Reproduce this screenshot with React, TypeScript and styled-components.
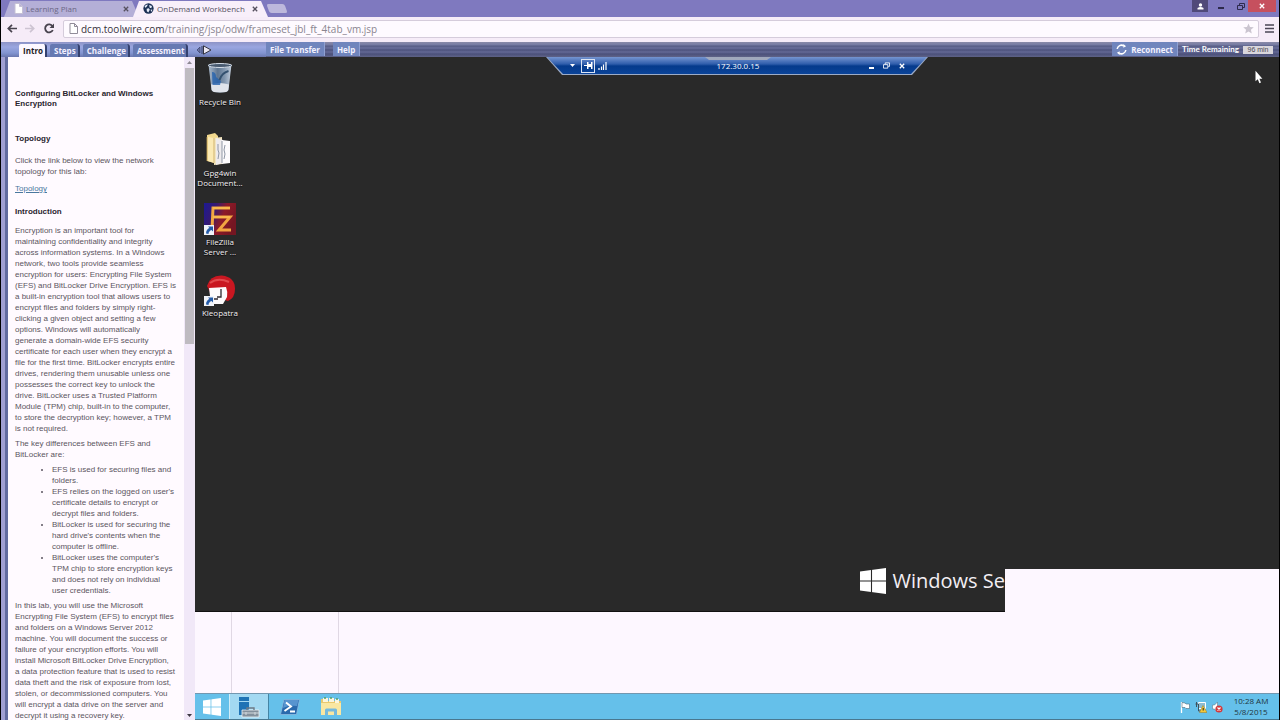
import React from 'react';
import styled, { createGlobalStyle, css } from 'styled-components';

const ui = `'Open Sans', 'Noto Sans', sans-serif`;
const doc = `'Liberation Sans', Arial, sans-serif`;

const GlobalStyle = createGlobalStyle`
  * { box-sizing: border-box; }
  body { margin: 0; background: #000; overflow: hidden; }
  button, input { font: inherit; color: inherit; margin: 0; padding: 0; border: 0; background: none; }
  svg { display: block; flex: none; }
`;

const Window = styled.div`
  display: flex;
  flex-direction: column;
  height: 100vh;
  padding: 0 1px;
  font-family: ${ui};
  font-size: 8px;
`;

/* ---------- browser chrome ---------- */
const TitleBar = styled.header`
  display: flex;
  align-items: stretch;
  height: 17px;
  padding: 0 3px;
  background: #7f79bf;
`;
const TabShape = styled.div<{ $active?: boolean }>`
  display: flex;
  align-items: center;
  width: 135px;
  margin-right: ${p => (p.$active ? 0 : -6)}px;
  padding: 0 10px;
  gap: 3px;
  background: ${p => (p.$active ? '#f8effa' : '#b4afd7')};
  color: ${p => (p.$active ? '#55505f' : '#6c6886')};
  clip-path: polygon(0 100%, 6px 1px, calc(100% - 7px) 1px, 100% 100%);
`;
const TabTitle = styled.span`
  flex: 1;
  white-space: nowrap;
`;
const IconButton = styled.button`
  display: flex;
  align-items: center;
  justify-content: center;
`;
const NewTab = styled.button`
  align-self: center;
  width: 18px;
  height: 9px;
  && { background: #bdb8dc; }
  border-radius: 2px;
  transform: skewX(20deg);
`;
const Spacer = styled.div`
  flex: 1;
`;
const CaptionButton = styled(IconButton)<{ $w: number; $bg?: string }>`
  && { background: ${p => p.$bg || 'transparent'}; }
  width: ${p => p.$w}px;
  height: 12px;
  color: #2d2a4c;
`;
const AddressRow = styled.div`
  display: flex;
  align-items: center;
  height: 25px;
  padding: 0 5px 2px 6px;
  gap: 8px;
  background: #f6ecf8;
`;
const Omnibox = styled.div`
  display: flex;
  align-items: center;
  flex: 1;
  height: 18px;
  margin-right: -2px;
  padding: 0 4px 0 5px;
  gap: 3px;
  background: #fefaff;
  border: 1px solid #d5ccdb;
  border-radius: 2px;
`;
const UrlText = styled.span`
  flex: 1;
  font-size: 10px;
  line-height: 14px;
  color: #8a8590;
  white-space: nowrap;
  b { font-weight: 400; color: #37323c; }
`;

/* ---------- workbench bar ---------- */
const WorkBar = styled.nav`
  display: flex;
  align-items: stretch;
  height: 15px;
  background:
    linear-gradient(#8d93c6, #9aa6e0 5px, #8294d0 11px, #6b77ae) 0 0 / 265px 100% no-repeat,
    linear-gradient(#8a8aa8, #757aa3 3px, #565b83 4px, #6a6f9b 6px, #4d527c 8px, #646995 10px, #4b507a 12px, #5f6388 15px);
`;
const PageTabs = styled.div`
  display: flex;
  align-items: stretch;
  gap: 3px;
  width: 194px;
  padding: 2px 0 0 18px;
`;
const PageTab = styled.button<{ $active?: boolean }>`
  && {
    padding: 0 2px 0 4px;
    background: ${p => (p.$active ? '#fdf8ff' : '#6679b2')};
    color: ${p => (p.$active ? '#1d1a24' : '#f4f0ff')};
    font-weight: 700;
    line-height: 12px;
    border-right: 2px solid #35416f;
    border-radius: 2px 3px 0 0;
    white-space: nowrap;
  }
`;
const BarButton = styled.button<{ $gap?: number }>`
  && {
    display: flex;
    align-items: center;
    gap: 4px;
    height: 14px;
    padding: 0 4px;
    margin-left: ${p => p.$gap || 0}px;
    background: #7085bd;
    border-right: 1px solid #8fa0d2;
    color: #f4f2ff;
    font-weight: 700;
    white-space: nowrap;
  }
`;
const TimeBox = styled.div`
  display: flex;
  align-items: center;
  gap: 4px;
  height: 13px;
  margin: 0 6px 0 4px;
  color: #fff;
  font-family: Lato, sans-serif;
  font-weight: 700;
  white-space: nowrap;
`;
const TimeValue = styled.output`
  width: 30px;
  height: 8px;
  margin-top: 2px;
  background: #d9d6dc;
  color: #4b4850;
  font: 7px/8px ${doc};
  text-align: center;
`;

/* ---------- lab guide ---------- */
const Body = styled.main`
  display: flex;
  flex: 1;
  min-height: 0;
`;
const Guide = styled.aside`
  display: flex;
  width: 194px;
  min-height: 0;
  overflow: hidden;
  background: #fffaff;
  border-left: 4px solid #a09fd2;
`;
const GuideEdge = styled.div`
  width: 3px;
  background: #626b9f;
`;
const GuideText = styled.article`
  flex: 1;
  min-width: 0;
  padding: 32px 5px 0 7px;
  color: #5b5560;
  font: 8px/11px ${doc};
  p, li { white-space: pre-line; }
  p { margin: 0 0 4px; }
  ul { margin: 0 0 4px; padding-left: 37px; }
  a { color: #4a789e; }
`;
const GuideHeading = styled.h2<{ $top?: number; $bottom: number }>`
  margin: ${p => p.$top || 0}px 0 ${p => p.$bottom}px;
  color: #29252e;
  font-size: 8px;
  line-height: ${p => (p.$top ? 11 : 10)}px;
`;
const LinkLine = styled.p`
  && { margin: 6px 0 0; }
`;
const Scroller = styled.div`
  display: flex;
  flex-direction: column;
  align-items: center;
  width: 11px;
  padding: 4px 0 3px;
  background: #f1e8f8;
`;
const Thumb = styled.div`
  width: 9px;
  height: 42%;
  margin-top: 4px;
  background: #bfbbc1;
`;

/* ---------- remote desktop ---------- */
const Remote = styled.section`
  position: relative;
  display: flex;
  flex-direction: column;
  flex: 1;
  min-width: 0;
  background: #fdf7ff;
`;
const Desktop = styled.div`
  flex: 1;
  min-height: 0;
  background: #292929;
`;
const Shortcuts = styled.div`
  display: flex;
  flex-direction: column;
  width: 50px;
  padding-top: 4px;
`;
const Shortcut = styled.button`
  display: flex;
  flex-direction: column;
  align-items: center;
  height: 71px;
  gap: 2px;
  && { color: #f4f0f4; line-height: 10px; }
  span { white-space: pre; text-shadow: 0 1px 1px #000; }
`;
const BrandStrip = styled.div`
  width: 810px;
  max-width: 75%;
  height: 43px;
  background: #292929;
  border-bottom: 1px solid #111;
`;
const Brand = styled.div`
  display: flex;
  justify-content: flex-end;
  align-items: center;
  gap: 7px;
  height: 24px;
  color: #f3eff4;
  font-size: 20px;
  line-height: 24px;
  white-space: nowrap;
`;
const Blank = styled.div`
  display: flex;
  height: 81px;
`;
const BlankColumn = styled.div<{ $w: number }>`
  width: ${p => p.$w}px;
  border-right: 1px solid #e0d8e4;
`;

const BarOutline = styled.div`
  position: absolute;
  top: 0;
  left: 351px;
  width: 382px;
  height: 18px;
  background: #9cabc6;
  clip-path: polygon(0 0, 100% 0, calc(100% - 16px) 100%, 16px 100%);
`;
const BarFill = styled.div`
  display: flex;
  align-items: center;
  height: 17px;
  padding: 0 23px 0 24px;
  background: linear-gradient(#7695d1, #2f5dab 7px, #053a8c 9px, #0a4398);
  clip-path: polygon(1px 0, calc(100% - 1px) 0, calc(100% - 17px) 100%, 17px 100%);
  color: #fff;
`;
const BarTitle = styled.div`
  flex: 1;
  display: flex;
  flex-direction: column;
  align-items: center;
  align-self: flex-start;
  line-height: 11px;
  &::before {
    content: '';
    width: 66px;
    height: 3px;
    background: #a0a8bd;
    clip-path: polygon(0 0, 100% 0, calc(100% - 4px) 100%, 4px 100%);
  }
`;
const PinButton = styled(IconButton)`
  && { border: 1px solid #dbe4f4; margin: 0 3px 0 6px; }
  width: 14px;
  height: 14px;
`;
const BarControls = styled.div`
  display: flex;
  align-items: center;
  gap: 9px;
`;
const Pointer = styled.div`
  position: absolute;
  top: 13px;
  right: 16px;
`;

const TaskBar = styled.footer`
  display: flex;
  align-items: stretch;
  height: 27px;
  background: #65c0ea;
  border-top: 1px solid #7297b0;
  border-bottom: 1px solid #497890;
`;
const taskHot = css`
  && {
    background: #a3d9f2;
    border-left: 1px solid #d0edf9;
    border-right: 1px solid #4485a5;
  }
`;
const Task = styled(IconButton)<{ $w: number; $hot?: boolean }>`
  width: ${p => p.$w}px;
  ${p => p.$hot && taskHot}
`;
const Tray = styled.div`
  display: flex;
  align-items: center;
  gap: 5px;
`;
const Clock = styled.time`
  width: 56px;
  padding-top: 1px;
  color: #1f3540;
  line-height: 11px;
  text-align: center;
  white-space: pre;
`;

/* ---------- drawings ---------- */
const PageIcon = ({ dim = '#918c99' }: { dim?: string }) => (
  <svg width="9" height="11" viewBox="0 0 9 11" fill="#fff" stroke={dim} strokeWidth="1">
    <path d="M1 .5h4.5l3 3v7H1zM5.5.5v3h3" />
  </svg>
);
const CloseX = ({ s = 6, c = '#56515f' }: { s?: number; c?: string }) => (
  <svg width={s} height={s} viewBox="0 0 6 6" stroke={c} strokeWidth="1.3"><path d="M.8.8l4.4 4.4M5.2.8L.8 5.2" /></svg>
);
const Globe = () => (
  <svg width="11" height="11" viewBox="0 0 12 12">
    <circle cx="6" cy="6" r="5.6" fill="#1c3155" />
    <path d="M1.6 4.2Q3 1.5 5.2 1.6L4.6 3.4 2.8 5.2zM6.7 2.2l3 1.2-.6 2.2-1.8-.5zM4 6.4l2.4-.6 1 1.5-1.6 3-1.6-1.2zM8.4 7.2l2 .2-1.6 2.4z" fill="#e8eefb" />
  </svg>
);
const WinLogo = ({ size, cut }: { size: number; cut: string }) => (
  <svg width={size} height={size} viewBox="0 0 26 26">
    <path d="M0 3.6L26 0v26L0 22.4z" fill="#fff" />
    <path d="M11.5 0v26M0 13h26" stroke={cut} strokeWidth="1.1" />
  </svg>
);
const ShortcutArrow = () => (
  <g>
    <path d="M0 22h10v10H0z" fill="#f1f3f8" />
    <path d="M2 30.500C2 27 4 25.500 5.500 25L4 23.500h5v5L7.500 27C6 27.500 4.500 29 4.500 31z" fill="#245ba8" />
  </g>
);
const BinIcon = () => (
  <svg width="34" height="34" viewBox="0 0 34 34">
    <defs>
      <linearGradient id="bin" x1="0" x2="1"><stop offset="0" stopColor="#a9b9cc" /><stop offset=".4" stopColor="#5f7691" /><stop offset=".7" stopColor="#8196ae" /><stop offset="1" stopColor="#c3cedc" /></linearGradient>
    </defs>
    <path d="M5.500 3.500h23L25.500 29Q25 31.500 17 31.500T8.500 29z" fill="url(#bin)" />
    <path d="M8 23.500q9-3 18 0l-.8 5.500Q25 31.500 17 31.500T8.700 29z" fill="#dfe3ea" />
    <path d="M9 11q4 0 4 5l5 4-1 4H9.500z" fill="#2461ae" opacity=".8" />
    <path d="M25.500 10q-7 2-9 9" stroke="#34516f" strokeWidth="2" fill="none" />
    <ellipse cx="17" cy="4.500" rx="11.700" ry="2" fill="#485a70" stroke="#d4dde8" />
  </svg>
);
const FolderDocs = () => (
  <svg width="34" height="34" viewBox="0 0 34 34">
    <path d="M4 3l8-2 3 3v28L4 29z" fill="#f2d98e" />
    <path d="M5 5l6 1v25l-6-2z" fill="#fbeab4" />
    <path d="M11 6l8-1v27l-8 1z" fill="#f3e6c0" />
    <path d="M13 6l7 2v23l-7 2z" fill="#eeebed" />
    <path d="M19 8l8 1v22l-8 1z" fill="#fdfbfd" />
    <path d="M15 12v6l1 3-1 6M19 9v22M22 13l-1 5 1 4-1 5" stroke="#9097a5" fill="none" strokeWidth="1" />
    <path d="M4 5v24M11 6v25" stroke="#c9a75c" strokeWidth=".8" />
  </svg>
);
const FileZilla = () => (
  <svg width="32" height="32" viewBox="0 0 32 32">
    <defs><linearGradient id="fz" x1="0" y1="0" x2="1" y2=".4"><stop offset="0" stopColor="#1c1993" /><stop offset=".35" stopColor="#351a72" /><stop offset=".65" stopColor="#8d1a28" /><stop offset="1" stopColor="#751622" /></linearGradient></defs>
    <path d="M0 0h32v32H0z" fill="url(#fz)" />
    <path d="M8 27L9 5h17M9 14h17L15 27h12" stroke="#f2a541" strokeWidth="3" fill="none" />
    <path d="M9 5h17M9 14h17" stroke="#ffcb5c" strokeWidth="1" fill="none" />
    <ShortcutArrow />
  </svg>
);
const Kleopatra = () => (
  <svg width="32" height="32" viewBox="0 0 32 32">
    <path d="M3 12Q6 1 18 1.500 31 3 31 15q0 9-7 12L8 22z" fill="#c91721" />
    <path d="M6 9Q14 3 25 8" stroke="#e04a4e" strokeWidth="2" fill="none" />
    <path d="M5 14l17-1q2 5 1 10l-4 7H7z" fill="#fdfafc" />
    <path d="M17 15v8h-4M9 25h5" stroke="#2f2a30" strokeWidth="1.300" fill="none" />
    <ShortcutArrow />
  </svg>
);
const ServerManager = () => (
  <svg width="22" height="22" viewBox="0 0 22 22">
    <path d="M1 1h10v4H1zM1 6h10v13H1z" fill="#1f73b5" />
    <path d="M1 5.500h10" stroke="#a3d9f2" />
    <path d="M4 14h17v7H4z" fill="#84909c" stroke="#eef4f8" strokeWidth=".8" />
    <path d="M9 14v-2h7v2" fill="none" stroke="#6d7a86" strokeWidth="1.400" />
    <path d="M4 17h17M8 16v3M17 16v3" stroke="#d4dade" strokeWidth="1" />
  </svg>
);
const PowerShell = () => (
  <svg width="20" height="16" viewBox="0 0 20 16">
    <path d="M4 .5h15.500L16.500 15.500H.5z" fill="#2a6aad" stroke="#8dbbe0" strokeWidth=".8" />
    <path d="M4.500 1h14l-1.500 6Q9 6 3 9z" fill="#5794cf" />
    <path d="M6 3.500l5 4L4.500 12M10 12.500h5" stroke="#fff" strokeWidth="1.900" fill="none" />
  </svg>
);
const Explorer = () => (
  <svg width="22" height="19" viewBox="0 0 22 19">
    <path d="M1 2h6l1 2h13v13H1z" fill="#e9c970" />
    <path d="M3 1h5v4H3zM9 1h5v4H9zM15 2h4v4h-4z" fill="#fbf5df" />
    <path d="M4 1h2M10 1h2M16 2h2" stroke="#53a06b" strokeWidth="1.500" />
    <path d="M1 6h20v12H1z" fill="#fae7a2" />
    <path d="M5 18v-5q0-1.500 1.500-1.500h9q1.500 0 1.500 1.500v5h-3v-3.500H8V18z" fill="#76b9dd" />
  </svg>
);
const FlagIcon = () => (
  <svg width="10" height="12" viewBox="0 0 10 12"><path d="M1.500 1v11" stroke="#fff" strokeWidth="1.300" /><path d="M2 1.500l3 .5 1 1h3.500v4.500H6L5 6.500H2z" fill="#fff" stroke="#4c6c7c" strokeWidth=".6" /></svg>
);
const NetIcon = () => (
  <svg width="12" height="12" viewBox="0 0 12 12"><path d="M3.500 1.500h7v6h-7z" fill="#8ebdd2" stroke="#fff" /><path d="M1.500 1v5M.5 3h3M3.500 3v7h3" stroke="#40525c" fill="none" /><path d="M8 4.500l4 7H4.500z" fill="#f4c838" stroke="#a87a16" strokeWidth=".5" /><path d="M8.200 7v2.500" stroke="#222" /></svg>
);
const SoundIcon = () => (
  <svg width="11" height="12" viewBox="0 0 11 12"><path d="M.5 4h2l3-3v10l-3-3h-2z" fill="#fff" stroke="#5f7e8e" strokeWidth=".6" /><circle cx="7" cy="8" r="3.600" fill="#d3383b" /><path d="M5.500 6.500l3 3M8.500 6.500l-3 3" stroke="#fff" strokeWidth="1.200" /></svg>
);

const shortcuts: [string, React.FC][] = [
  ['Recycle Bin', BinIcon],
  ['Gpg4win\nDocument...', FolderDocs],
  ['FileZilla\nServer ...', FileZilla],
  ['Kleopatra', Kleopatra],
];

const introduction = `Encryption is an important tool for
maintaining confidentiality and integrity
across information systems. In a Windows
network, two tools provide seamless
encryption for users: Encrypting File System
(EFS) and BitLocker Drive Encryption. EFS is
a built-in encryption tool that allows users to
encrypt files and folders by simply right-
clicking a given object and setting a few
options. Windows will automatically
generate a domain-wide EFS security
certificate for each user when they encrypt a
file for the first time. BitLocker encrypts entire
drives, rendering them unusable unless one
possesses the correct key to unlock the
drive. BitLocker uses a Trusted Platform
Module (TPM) chip, built-in to the computer,
to store the decryption key; however, a TPM
is not required.`;

const differences = [
  'EFS is used for securing files and\nfolders.',
  "EFS relies on the logged on user's\ncertificate details to encrypt or\ndecrypt files and folders.",
  "BitLocker is used for securing the\nhard drive's contents when the\ncomputer is offline.",
  "BitLocker uses the computer's\nTPM chip to store encryption keys\nand does not rely on individual\nuser credentials.",
];

const labSummary = `In this lab, you will use the Microsoft
Encrypting File System (EFS) to encrypt files
and folders on a Windows Server 2012
machine. You will document the success or
failure of your encryption efforts. You will
install Microsoft BitLocker Drive Encryption,
a data protection feature that is used to resist
data theft and the risk of exposure from lost,
stolen, or decommissioned computers. You
will encrypt a data drive on the server and
decrypt it using a recovery key.`;

export default function App() {
  return (
    <Window>
      <GlobalStyle />
      <TitleBar>
        <TabShape>
          <PageIcon dim="#c5c0d4" />
          <TabTitle>Learning Plan</TabTitle>
          <IconButton aria-label="Close Learning Plan"><CloseX /></IconButton>
        </TabShape>
        <TabShape $active>
          <Globe />
          <TabTitle>OnDemand Workbench</TabTitle>
          <IconButton aria-label="Close OnDemand Workbench"><CloseX /></IconButton>
        </TabShape>
        <NewTab aria-label="New tab" />
        <Spacer />
        <CaptionButton $w={16} $bg="#504979" aria-label="Profile">
          <svg width="7" height="7" viewBox="0 0 7 7" fill="#fff"><circle cx="3.500" cy="2" r="1.700" /><path d="M.5 6.500V5q3-2 6 0v1.500z" /></svg>
        </CaptionButton>
        <CaptionButton $w={25} aria-label="Minimize"><svg width="6" height="6"><path d="M0 5h6" stroke="currentColor" strokeWidth="2" /></svg></CaptionButton>
        <CaptionButton $w={15} aria-label="Restore">
          <svg width="8" height="7" viewBox="0 0 8 7" fill="none" stroke="currentColor"><path d="M2.500 2V.5h5v4H6M.5 2.500h5v4h-5z" /></svg>
        </CaptionButton>
        <CaptionButton $w={28} $bg="#c6505e" aria-label="Close"><CloseX c="#fff" /></CaptionButton>
      </TitleBar>

      <AddressRow>
        <IconButton aria-label="Back"><svg width="10" height="9" viewBox="0 0 10 9" fill="none" stroke="#48434e" strokeWidth="1.700"><path d="M10 4.500H1.500M5 .8L1.300 4.500 5 8.200" /></svg></IconButton>
        <IconButton aria-label="Forward"><svg width="10" height="9" viewBox="0 0 10 9" fill="none" stroke="#cdc4d2" strokeWidth="1.700"><path d="M0 4.500h8.500M5 .8l3.700 3.700L5 8.200" /></svg></IconButton>
        <IconButton aria-label="Reload"><svg width="12" height="11" viewBox="0 0 12 11"><path d="M9.500 3.200A4 4 0 1 0 9.800 7" fill="none" stroke="#48434e" strokeWidth="1.800" /><path d="M11 .5v4.500H6.500z" fill="#48434e" /></svg></IconButton>
        <Omnibox>
          <PageIcon />
          <UrlText><b>dcm.toolwire.com</b>/training/jsp/odw/frameset_jbl_ft_4tab_vm.jsp</UrlText>
          <svg width="11" height="11" viewBox="0 0 24 24" fill="#cbc5d0"><path d="M12 1l3.300 7.600 8.200.7-6.200 5.400 1.900 8L12 18.400l-7.200 4.300 1.900-8L.5 9.300l8.200-.7z" /></svg>
        </Omnibox>
        <IconButton aria-label="Menu"><svg width="9" height="9"><path d="M0 1h9M0 4.500h9M0 8h9" stroke="#4a4554" strokeWidth="1.600" /></svg></IconButton>
      </AddressRow>

      <WorkBar>
        <PageTabs>
          <PageTab $active>Intro</PageTab>
          <PageTab>Steps</PageTab>
          <PageTab>Challenge</PageTab>
          <PageTab>Assessment</PageTab>
        </PageTabs>
        <IconButton aria-label="Toggle guide">
          <svg width="18" height="10" viewBox="0 0 18 10"><path d="M5 2v6L2 5z" fill="#6b74a8" stroke="#3f466e" strokeWidth=".8" /><path d="M7 1v8" stroke="#3f466e" strokeWidth="1.200" /><path d="M8.500 .8v8.400L16 5z" fill="#ece8f4" stroke="#34343f" /></svg>
        </IconButton>
        <BarButton $gap={53}>File Transfer</BarButton>
        <BarButton $gap={8}>Help</BarButton>
        <Spacer />
        <BarButton>
          <svg width="11" height="11" viewBox="0 0 12 12" fill="none" stroke="#fff" strokeWidth="1.700"><path d="M1.300 5.500A4.700 4.700 0 0 1 8.500 2M10.700 6.500A4.700 4.700 0 0 1 3.500 10" /><path d="M8 0v4l3-1.500zM4 8v4L1 9.500z" fill="#fff" stroke="none" /></svg>
          Reconnect
        </BarButton>
        <TimeBox>Time Remaining<TimeValue>96 min</TimeValue></TimeBox>
      </WorkBar>

      <Body>
        <Guide>
          <GuideEdge />
          <GuideText>
            <GuideHeading $bottom={24}>Configuring BitLocker and Windows Encryption</GuideHeading>
            <GuideHeading $top={24} $bottom={11}>Topology</GuideHeading>
            <p>{'Click the link below to view the network\ntopology for this lab:'}</p>
            <LinkLine><a href="#topology">Topology</a></LinkLine>
            <GuideHeading $top={12} $bottom={8}>Introduction</GuideHeading>
            <p>{introduction}</p>
            <p>{'The key differences between EFS and\nBitLocker are:'}</p>
            <ul>
              {differences.map(item => <li key={item}>{item}</li>)}
            </ul>
            <p>{labSummary}</p>
          </GuideText>
          <Scroller>
            <svg width="5" height="3"><path d="M0 3L2.500 0 5 3z" fill="#8d8892" /></svg>
            <Thumb />
            <Spacer />
            <svg width="5" height="3"><path d="M0 0h5L2.500 3z" fill="#3c3742" /></svg>
          </Scroller>
        </Guide>

        <Remote>
          <Desktop>
            <Shortcuts>
              {shortcuts.map(([label, Icon]) => (
                <Shortcut key={label}><Icon /><span>{label}</span></Shortcut>
              ))}
            </Shortcuts>
          </Desktop>
          <BrandStrip>
            <Brand><WinLogo size={26} cut="#292929" />Windows Se</Brand>
          </BrandStrip>
          <Blank>
            <BlankColumn $w={37} />
            <BlankColumn $w={107} />
          </Blank>
          <TaskBar>
            <Task $w={34} aria-label="Start"><WinLogo size={18} cut="#65c0ea" /></Task>
            <Task $w={40} $hot aria-label="Server Manager"><ServerManager /></Task>
            <Task $w={42} aria-label="PowerShell"><PowerShell /></Task>
            <Task $w={40} aria-label="File Explorer"><Explorer /></Task>
            <Spacer />
            <Tray><FlagIcon /><NetIcon /><SoundIcon /></Tray>
            <Clock>{'10:28 AM\n5/8/2015'}</Clock>
          </TaskBar>

          <BarOutline>
            <BarFill>
              <svg width="5" height="3"><path d="M0 0h5L2.500 3z" fill="#fff" /></svg>
              <PinButton aria-label="Pin the connection bar"><svg width="9" height="7" viewBox="0 0 9 7"><path d="M0 3h3v1H0zM3 0h1.500v2H7V0h1.500v7H7V5H4.500v2H3z" fill="#fff" /></svg></PinButton>
              <svg width="9" height="8"><path d="M1 8V6M3.500 8V4.500M5.500 8V2.500M8 8V0" stroke="#fff" strokeWidth="1.200" /></svg>
              <BarTitle>172.30.0.15</BarTitle>
              <BarControls>
                <IconButton aria-label="Minimize session"><svg width="5" height="7"><path d="M0 6h5" stroke="#fff" strokeWidth="2" /></svg></IconButton>
                <IconButton aria-label="Restore session"><svg width="7" height="7" viewBox="0 0 8 7" fill="none" stroke="#fff"><path d="M2.500 2V.5h5v4H6M.5 2.500h5v4h-5z" /></svg></IconButton>
                <IconButton aria-label="Close session"><CloseX c="#fff" /></IconButton>
              </BarControls>
            </BarFill>
          </BarOutline>
          <Pointer>
            <svg width="8" height="14" viewBox="0 0 8 14"><path d="M.5 .8v10.500l2.300-2 1.600 3.900 1.600-.7-1.600-3.700h3z" fill="#fff" /></svg>
          </Pointer>
        </Remote>
      </Body>
    </Window>
  );
}
